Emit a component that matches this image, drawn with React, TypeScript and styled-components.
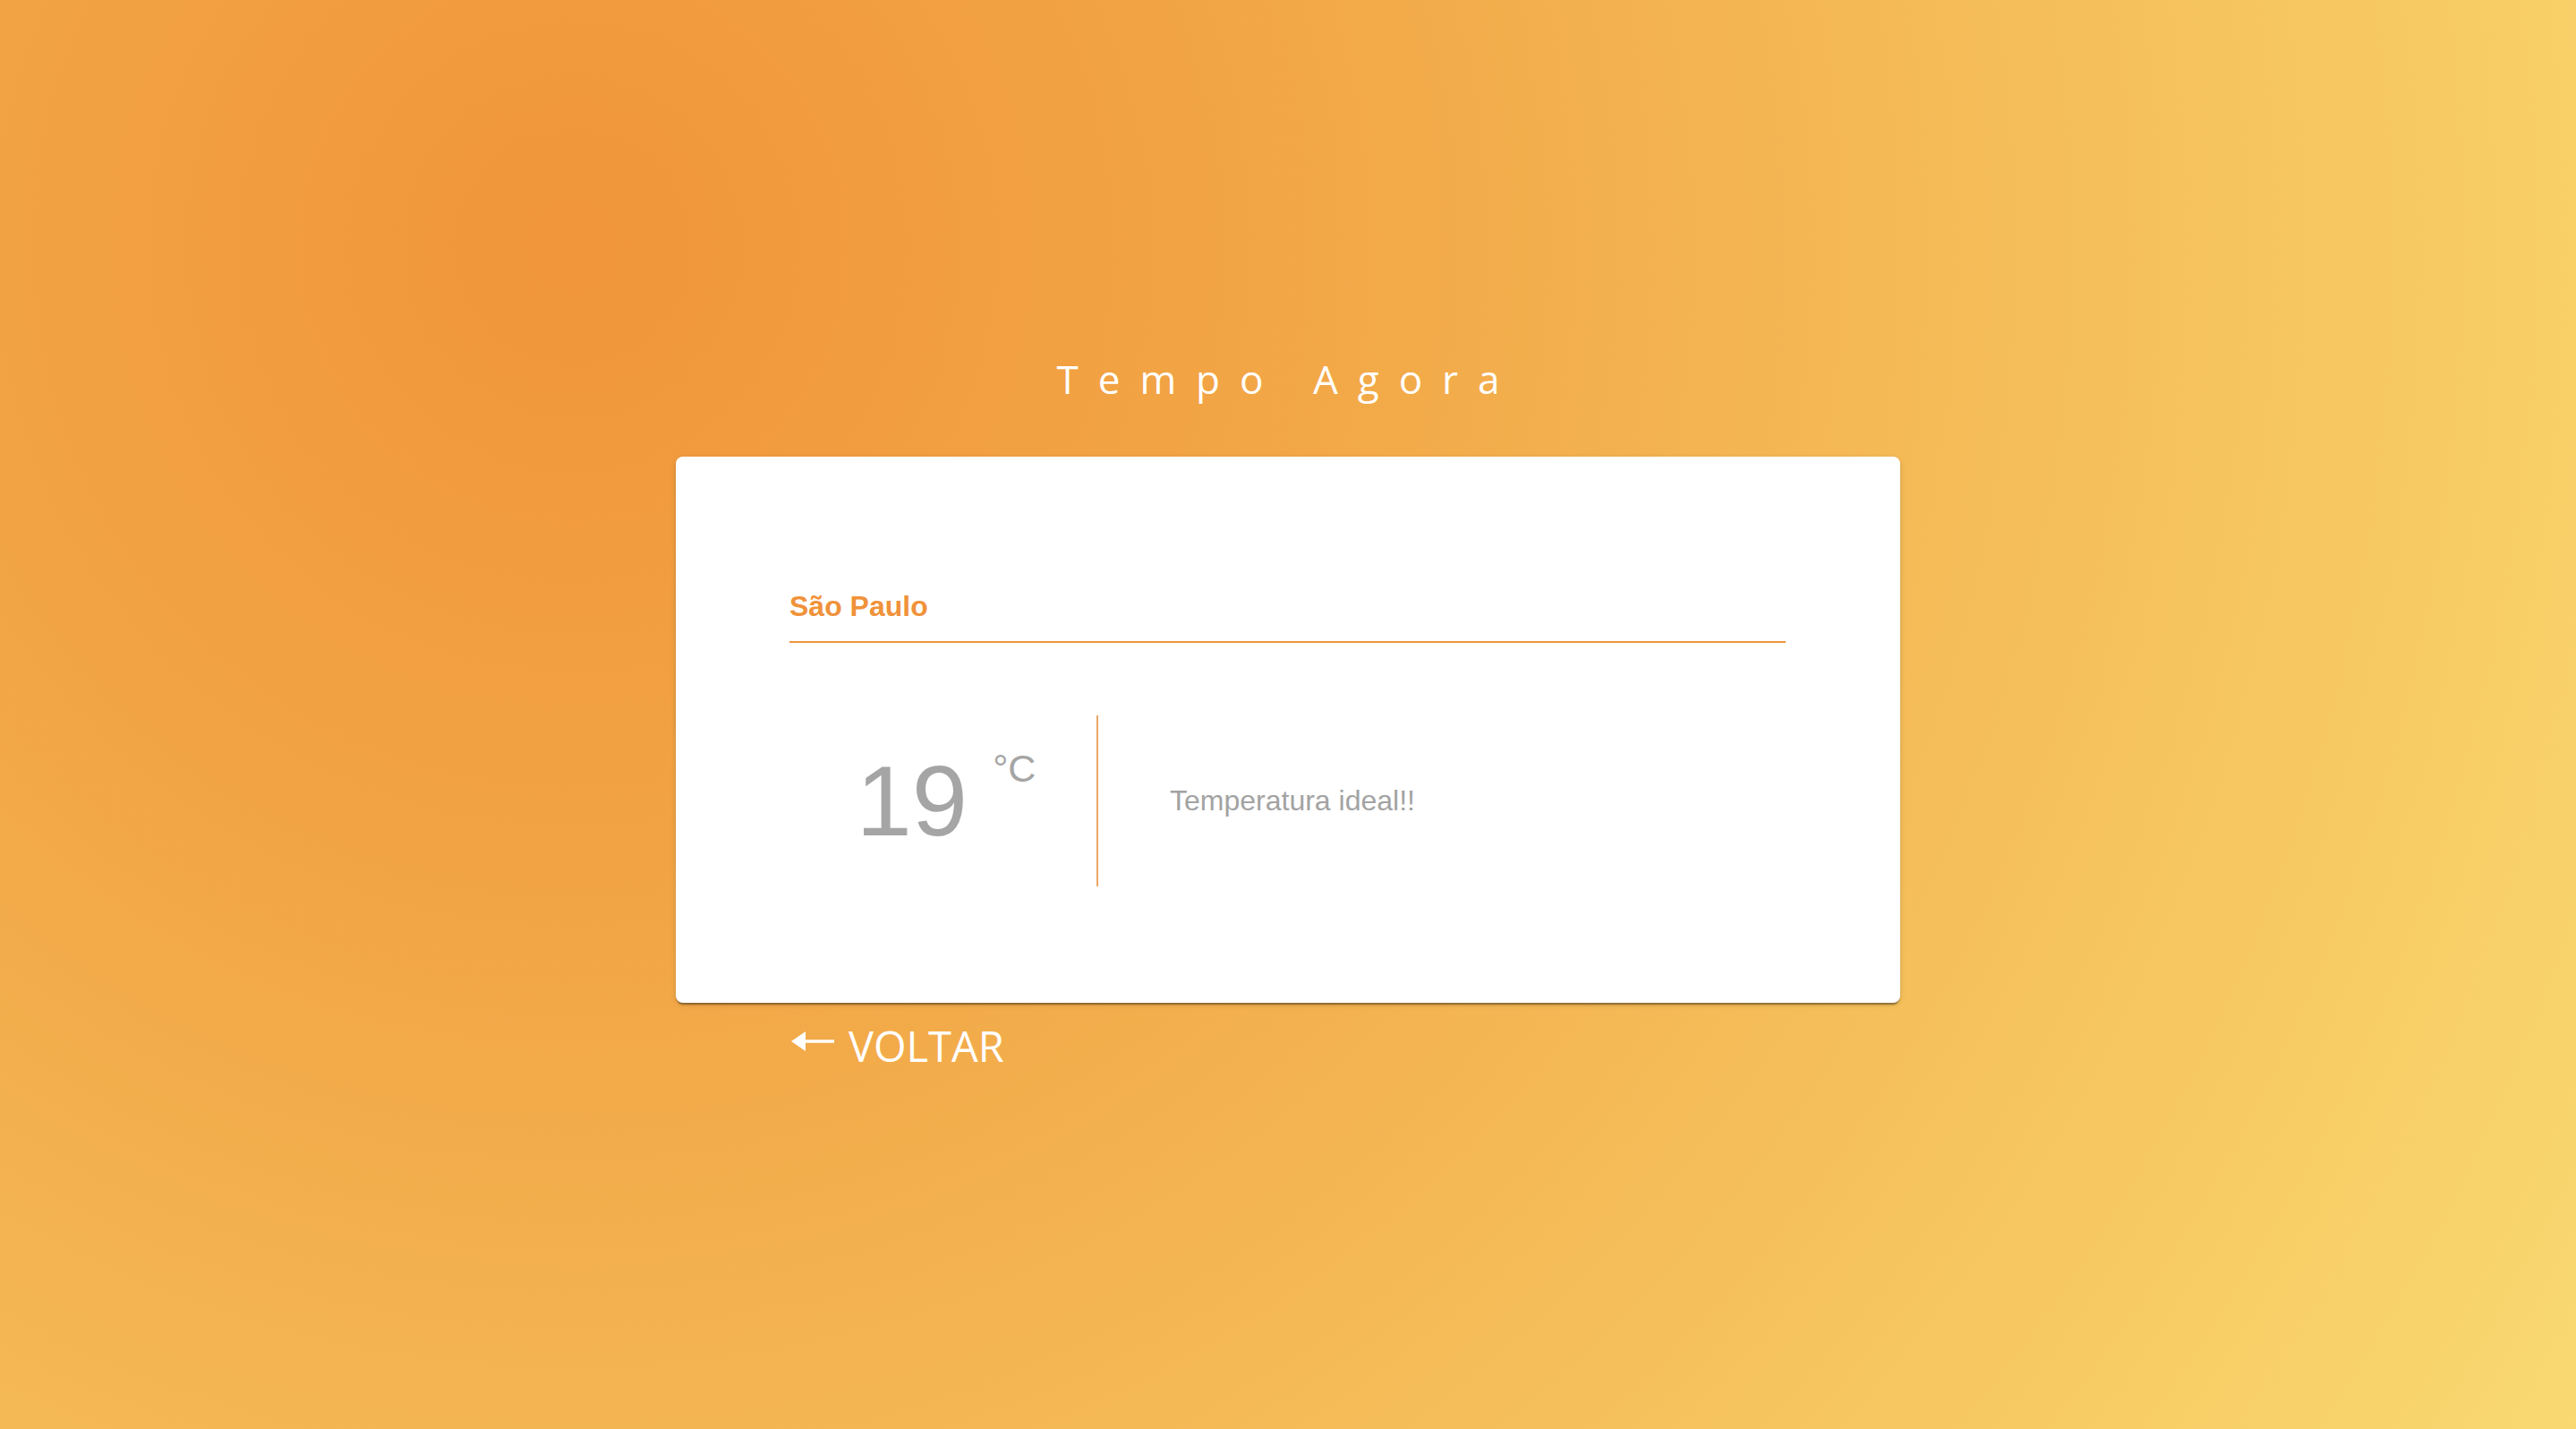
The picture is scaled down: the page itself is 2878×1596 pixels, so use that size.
import styled, { createGlobalStyle } from "styled-components";

const GlobalStyle = createGlobalStyle`
  html, body {
    margin: 0;
    padding: 0;
  }
  body {
    font-family: "Liberation Sans", Arial, sans-serif;
  }
`;

const Page = styled.main`
  min-height: 1596px;
  box-sizing: border-box;
  padding-top: 393px;
  display: flex;
  flex-direction: column;
  align-items: center;
  background: radial-gradient(
    circle 2620px at 640px 275px,
    #f0953a 0%,
    #f2a444 27%,
    #f4b955 56%,
    #f8cf68 86%,
    #f9d973 100%
  );
`;

const Title = styled.h1`
  margin: 0 0 57px;
  font-family: "Open Sans", sans-serif;
  font-weight: 400;
  font-size: 44px;
  line-height: 60px;
  letter-spacing: 22px;
  color: #ffffff;
`;

const Card = styled.section`
  width: 1368px;
  height: 610px;
  box-sizing: border-box;
  padding: 149px 128px 0 127px;
  background: #ffffff;
  border-radius: 8px;
  box-shadow: 0 4px 2px -2px rgba(0, 0, 0, 0.28), 0 2px 2px rgba(0, 0, 0, 0.14),
    0 2px 6px rgba(0, 0, 0, 0.12);
`;

const CityField = styled.div`
  padding-bottom: 20px;
  border-bottom: 2px solid #f0963a;
  font-size: 32px;
  line-height: 37px;
  font-weight: 700;
  color: #f0923a;
`;

const Reading = styled.div`
  display: flex;
  align-items: center;
  height: 191px;
  margin-top: 81px;
`;

const TempColumn = styled.div`
  flex: 0 0 343px;
  box-sizing: border-box;
  padding-left: 7px;
  display: flex;
  justify-content: center;
  align-items: flex-start;
  color: #a5a5a5;
`;

const Degrees = styled.span`
  font-size: 112px;
  line-height: 112px;
`;

const Unit = styled.span`
  margin: -2px 0 0 28px;
  font-size: 43px;
  line-height: 43px;
`;

const Divider = styled.div`
  align-self: stretch;
  width: 2px;
  background: #eaa666;
`;

const Message = styled.p`
  margin: 0 0 0 80px;
  font-size: 32px;
  line-height: 37px;
  color: #a3a3a3;
`;

const Footer = styled.div`
  width: 1368px;
  box-sizing: border-box;
  padding-left: 129px;
  margin-top: 16px;
`;

const BackLink = styled.a`
  display: inline-flex;
  align-items: flex-start;
  gap: 16px;
  font-family: "Open Sans", sans-serif;
  font-size: 47px;
  line-height: 64px;
  color: #ffffff;
  text-decoration: none;
  cursor: pointer;

  svg {
    margin-top: 15px;
  }
`;

const ArrowLeft = () => (
  <svg width="48" height="24" viewBox="0 0 48 24" fill="none">
    <path d="M14 10.2H48V13.8H14Z" fill="#ffffff" />
    <path d="M0 12L16 1V23Z" fill="#ffffff" />
  </svg>
);

export default function App() {
  return (
    <>
      <GlobalStyle />
      <Page>
        <Title>Tempo Agora</Title>
        <Card>
          <CityField>São Paulo</CityField>
          <Reading>
            <TempColumn>
              <Degrees>19</Degrees>
              <Unit>°C</Unit>
            </TempColumn>
            <Divider />
            <Message>Temperatura ideal!!</Message>
          </Reading>
        </Card>
        <Footer>
          <BackLink>
            <ArrowLeft />
            VOLTAR
          </BackLink>
        </Footer>
      </Page>
    </>
  );
}
